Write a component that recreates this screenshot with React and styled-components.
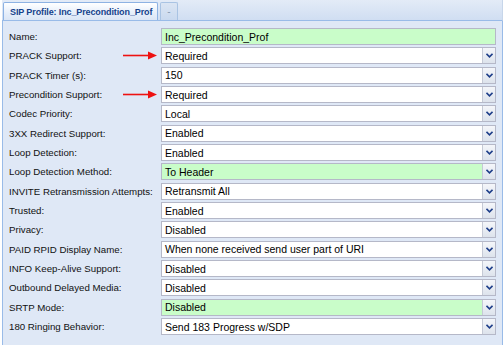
import React from "react";
import styled, { createGlobalStyle } from "styled-components";

const GlobalStyle = createGlobalStyle`
  html, body {
    margin: 0;
    padding: 0;
    background: #ffffff;
  }
  body {
    font-family: "Liberation Sans", Arial, sans-serif;
    font-size: 10px;
    color: #000;
  }
`;

const Wrapper = styled.div`
  width: 504px;
  height: 345px;
  box-sizing: border-box;
  padding: 0 1px 0 2px;
  overflow: hidden;
`;

const TabStrip = styled.div`
  height: 21px;
  box-sizing: border-box;
  display: flex;
  align-items: flex-end;
  gap: 2px;
  padding-left: 1px;
  background: linear-gradient(#e3ebf7, #d0def2);
  border-bottom: 1px solid #99bbe8;
  border-right: 1px solid #c7d6ea;
`;

const Tab = styled.div`
  height: 18px;
  box-sizing: border-box;
  display: flex;
  align-items: center;
  padding: 0 6px;
  border: 1px solid ${(p) => (p.active ? "#8db2e3" : "#a9c3e3")};
  border-bottom: none;
  border-radius: 2px 2px 0 0;
  background: ${(p) =>
    p.active
      ? "linear-gradient(#ffffff, #e6eefa 60%, #dbe6f6)"
      : "linear-gradient(#dbe5f3, #c9d9ef)"};
  color: ${(p) => (p.active ? "#15428b" : "#8a9bb5")};
  font-weight: ${(p) => (p.active ? "bold" : "normal")};
  font-size: ${(p) => (p.active ? "9px" : "10px")};
  letter-spacing: ${(p) => (p.active ? "-0.12px" : "0")};
  white-space: nowrap;
  overflow: hidden;
  width: ${(p) => (p.active ? "155px" : "18px")};
  justify-content: ${(p) => (p.active ? "flex-start" : "center")};
`;

const Panel = styled.div`
  height: 324px;
  box-sizing: border-box;
  background: #dfe8f6;
  border-left: 1px solid #99bbe8;
  border-right: 1px solid #99bbe8;
  padding: 7px 6px 0 6px;
`;

const Form = styled.div`
  display: grid;
  grid-template-columns: 152px 1fr;
  grid-auto-rows: 17px;
  row-gap: 2.35px;
`;

const Label = styled.div`
  display: flex;
  align-items: center;
  position: relative;
  color: #111;
  white-space: nowrap;
  font-size: 9.7px;
`;

const Arrow = styled.svg`
  position: absolute;
  left: 114px;
  top: 4px;
`;

const Field = styled.div`
  display: flex;
  align-items: stretch;
  box-sizing: border-box;
  border: 1px solid #b5b8c8;
  background: ${(p) => (p.green ? "#c9fdc9" : "#ffffff")};
`;

const Value = styled.div`
  flex: 1;
  display: flex;
  align-items: center;
  padding-left: 3px;
  white-space: nowrap;
  overflow: hidden;
  font-size: 10.5px;
`;

const Trigger = styled.div`
  width: 12px;
  border-left: 1px solid #c5cad6;
  background: linear-gradient(#f4f6fa, #dde3ec);
  display: flex;
  align-items: center;
  justify-content: center;
`;

const rows = [
  { label: "Name:", value: "Inc_Precondition_Prof", green: true, text: true },
  { label: "PRACK Support:", value: "Required", arrow: true },
  { label: "PRACK Timer (s):", value: "150" },
  { label: "Precondition Support:", value: "Required", arrow: true },
  { label: "Codec Priority:", value: "Local" },
  { label: "3XX Redirect Support:", value: "Enabled" },
  { label: "Loop Detection:", value: "Enabled" },
  { label: "Loop Detection Method:", value: "To Header", green: true },
  { label: "INVITE Retransmission Attempts:", value: "Retransmit All" },
  { label: "Trusted:", value: "Enabled" },
  { label: "Privacy:", value: "Disabled" },
  { label: "PAID RPID Display Name:", value: "When none received send user part of URI" },
  { label: "INFO Keep-Alive Support:", value: "Disabled" },
  { label: "Outbound Delayed Media:", value: "Disabled" },
  { label: "SRTP Mode:", value: "Disabled", green: true },
  { label: "180 Ringing Behavior:", value: "Send 183 Progress w/SDP" },
];

function Chevron() {
  return (
    <svg width="7" height="5" viewBox="0 0 7 5">
      <path d="M0.5 0.8 L3.5 3.8 L6.5 0.8" fill="none" stroke="#1f3f8a" strokeWidth="1.6" />
    </svg>
  );
}

export default function App() {
  return (
    <Wrapper>
      <GlobalStyle />
      <TabStrip>
        <Tab active>SIP Profile: Inc_Precondition_Prof</Tab>
        <Tab>-</Tab>
      </TabStrip>
      <Panel>
        <Form>
          {rows.map((r) => (
            <React.Fragment key={r.label}>
              <Label>
                {r.label}
                {r.arrow && (
                  <Arrow width="34" height="9" viewBox="0 0 34 9">
                    <line x1="0" y1="4.5" x2="27" y2="4.5" stroke="#ee1111" strokeWidth="1.6" />
                    <path d="M25 0.5 L34 4.5 L25 8.5 Z" fill="#ee1111" />
                  </Arrow>
                )}
              </Label>
              <Field green={r.green}>
                <Value>{r.value}</Value>
                {!r.text && (
                  <Trigger>
                    <Chevron />
                  </Trigger>
                )}
              </Field>
            </React.Fragment>
          ))}
        </Form>
      </Panel>
    </Wrapper>
  );
}
